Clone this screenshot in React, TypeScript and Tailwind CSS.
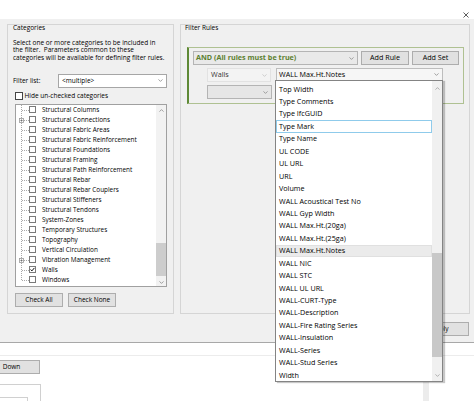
import React from "react";

const Chevron = ({ up = false, color = "#6a6a6a" }: { up?: boolean; color?: string }) => (
  <svg width="5" height="3" viewBox="0 0 5 3" className="block shrink-0">
    <path
      d={up ? "M0.5 2.6 L2.5 0.6 L4.5 2.6" : "M0.5 0.4 L2.5 2.4 L4.5 0.4"}
      fill="none"
      stroke={color}
      strokeWidth="0.8"
    />
  </svg>
);

type TreeItem = { label: string; plus?: boolean; checked?: boolean; last?: boolean };

const treeItems: TreeItem[] = [
  { label: "Structural Columns" },
  { label: "Structural Connections", plus: true },
  { label: "Structural Fabric Areas" },
  { label: "Structural Fabric Reinforcement" },
  { label: "Structural Foundations" },
  { label: "Structural Framing" },
  { label: "Structural Path Reinforcement" },
  { label: "Structural Rebar" },
  { label: "Structural Rebar Couplers" },
  { label: "Structural Stiffeners" },
  { label: "Structural Tendons" },
  { label: "System-Zones" },
  { label: "Temporary Structures" },
  { label: "Topography" },
  { label: "Vertical Circulation" },
  { label: "Vibration Management", plus: true },
  { label: "Walls", checked: true },
  { label: "Windows", last: true },
];

const ddItems = [
  "Top Width",
  "Type Comments",
  "Type IfcGUID",
  "Type Mark",
  "Type Name",
  "UL CODE",
  "UL URL",
  "URL",
  "Volume",
  "WALL Acoustical Test No",
  "WALL Gyp Width",
  "WALL Max.Ht.(20ga)",
  "WALL Max.Ht.(25ga)",
  "WALL Max.Ht.Notes",
  "WALL NIC",
  "WALL STC",
  "WALL UL URL",
  "WALL-CURT-Type",
  "WALL-Description",
  "WALL-Fire Rating Series",
  "WALL-Insulation",
  "WALL-Series",
  "WALL-Stud Series",
  "Width",
];

function TreeRow({ item }: { item: TreeItem }) {
  return (
    <div className="flex items-center h-[10px] shrink-0">
      <svg width="13" height="10" viewBox="0 0 13 10" className="block shrink-0">
        <line x1="5.5" y1="0" x2="5.5" y2={item.last ? 5.5 : 10} stroke="#a8a8a8" strokeWidth="1" strokeDasharray="1 1" />
        <line x1={item.plus ? 8 : 6} y1="5.5" x2="13" y2="5.5" stroke="#a8a8a8" strokeWidth="1" strokeDasharray="1 1" />
        {item.plus && (
          <g>
            <rect x="3.5" y="3.5" width="4" height="4" fill="#ffffff" stroke="#9a9a9a" strokeWidth="0.8" />
            <path d="M4.3 5.5 H6.7 M5.5 4.3 V6.7" stroke="#555" strokeWidth="0.6" />
          </g>
        )}
      </svg>
      <div className="w-[7px] h-[7px] border border-[#7a7a7a] bg-white shrink-0 flex items-center justify-center">
        {item.checked && (
          <svg width="5" height="5" viewBox="0 0 5 5" className="block">
            <path d="M0.6 2.5 L1.9 3.9 L4.4 0.9" fill="none" stroke="#111" strokeWidth="1" />
          </svg>
        )}
      </div>
      <span className="ml-[6px] text-[6.4px] leading-[10px] whitespace-nowrap">{item.label}</span>
    </div>
  );
}

function CategoriesBox() {
  return (
    <div className="w-[167px] h-[290px] border border-[#d5d5d5] flex flex-col shrink-0">
      <div className="ml-[5px] h-[6px] leading-[6px] text-[6.5px]">Categories</div>
      <div className="ml-[5px] mt-[7.5px] text-[6.5px] leading-[7.6px] whitespace-pre">
        {"Select one or more categories to be included in\nthe filter.  Parameters common to these\ncategories will be available for defining filter rules."}
      </div>
      <div className="mt-[12.7px] flex items-center h-[14px]">
        <span className="ml-[5px] text-[6.5px] leading-none">Filter list:</span>
        <div className="ml-auto mr-[6px] w-[109px] h-[14px] bg-white border border-[#a6a6a6] flex items-center pl-[3px] pr-[3px]">
          <span className="text-[6.5px] leading-none">&lt;multiple&gt;</span>
          <span className="ml-auto">
            <Chevron color="#8a8a8a" />
          </span>
        </div>
      </div>
      <div className="mt-[4px] ml-[7px] h-[8px] flex items-center">
        <div className="w-[8px] h-[8px] border border-[#444] bg-white shrink-0" />
        <span className="ml-[1.5px] text-[6.5px] leading-none whitespace-nowrap">Hide un-checked categories</span>
      </div>
      <div className="mt-[4px] ml-[7px] w-[152px] h-[183px] border border-[#a0a0a0] bg-white flex">
        <div className="flex-1 flex flex-col overflow-hidden">
          {treeItems.map((it) => (
            <TreeRow key={it.label} item={it} />
          ))}
        </div>
        <div className="w-[10px] bg-[#f2f2f2] flex flex-col">
          <div className="h-[12px] flex items-center justify-center">
            <Chevron up color="#8a8a8a" />
          </div>
          <div className="mt-[126px] h-[33px] bg-[#cdcdcd]" />
          <div className="flex-1 flex items-end justify-center pb-[2px]">
            <Chevron color="#8a8a8a" />
          </div>
        </div>
      </div>
      <div className="mt-[6px] ml-[7px] flex gap-[5px]">
        <div className="w-[48px] h-[14px] bg-[#e1e1e1] border border-[#adadad] flex items-center justify-center text-[6.5px] leading-none">
          Check All
        </div>
        <div className="w-[48px] h-[14px] bg-[#e1e1e1] border border-[#adadad] flex items-center justify-center text-[6.5px] leading-none">
          Check None
        </div>
      </div>
    </div>
  );
}

function FilterRulesBox() {
  return (
    <div className="w-[290px] h-[290px] border border-[#d5d5d5] flex flex-col shrink-0">
      <div className="ml-[4px] h-[6px] leading-[6px] text-[6.5px]">Filter Rules</div>
      <div className="mt-[16px] ml-[6px] w-[277px] h-[57px] border border-[#afc192] border-l-2 border-l-[#5f8a36] flex flex-col">
        <div className="mt-[3px] ml-[4px] flex">
          <div className="w-[165px] h-[14px] bg-[#e9e9e9] border border-[#b4b4b4] flex items-center pl-[2px] pr-[3px]">
            <span className="text-[7.2px] leading-none font-bold text-[#5c8030] whitespace-nowrap">AND (All rules must be true)</span>
            <span className="ml-auto">
              <Chevron color="#8a8a8a" />
            </span>
          </div>
          <div className="ml-[3px] w-[48px] h-[14px] bg-[#e1e1e1] border border-[#adadad] flex items-center justify-center text-[7.2px] leading-none">
            Add Rule
          </div>
          <div className="ml-[3px] w-[47px] h-[14px] bg-[#e1e1e1] border border-[#adadad] flex items-center justify-center text-[7.2px] leading-none">
            Add Set
          </div>
        </div>
        <div className="mt-[3px] ml-[18px] flex">
          <div className="w-[64px] h-[14px] bg-[#f3f3f3] border border-[#e2e2e2] flex items-center pl-[3px] pr-[3px]">
            <span className="text-[7.2px] leading-none text-[#333]">Walls</span>
            <span className="ml-auto">
              <Chevron color="#c4c4c4" />
            </span>
          </div>
          <div className="ml-[5px] w-[167px] h-[13px] bg-[#f6f6f6] border border-[#bdbdbd] flex items-center pl-[2px] pr-[3px]">
            <span className="text-[7.2px] leading-none whitespace-nowrap">WALL Max.Ht.Notes</span>
            <span className="ml-auto">
              <Chevron color="#8a8a8a" />
            </span>
          </div>
        </div>
        <div className="mt-[3px] ml-[18px] flex">
          <div className="w-[65px] h-[14px] bg-[#e6e6e6] border border-[#b4b4b4] flex items-center justify-end pr-[3px]">
            <Chevron color="#8a8a8a" />
          </div>
        </div>
      </div>
    </div>
  );
}

function Dropdown() {
  return (
    <div className="absolute left-[275px] top-[80px] w-[168px] h-[302px] bg-white border border-[#848484] flex shadow-[2px_1px_1px_rgba(0,0,0,0.22)]">
      <div className="w-[156px] flex flex-col pt-[2px] overflow-hidden">
        {ddItems.map((label, i) => {
          const focus = i === 3;
          const sel = i === 13;
          return (
            <div
              key={label}
              className={
                "h-[12.45px] shrink-0 flex items-center pl-[2px] border " +
                (focus
                  ? "border-[#8fcbeb] bg-white"
                  : sel
                  ? "border-[#e0e0e0] bg-[#ebebeb]"
                  : "border-transparent")
              }
            >
              <span className="text-[7.2px] leading-none whitespace-nowrap">{label}</span>
            </div>
          );
        })}
      </div>
      <div className="w-[10px] bg-[#f0f0f0] flex flex-col">
        <div className="h-[14px] flex items-center justify-center">
          <Chevron up color="#a0a0a0" />
        </div>
        <div className="mt-[158px] h-[104px] bg-[#c8c8c8]" />
        <div className="flex-1 flex items-end justify-center pb-[4px]">
          <Chevron color="#a0a0a0" />
        </div>
      </div>
    </div>
  );
}

export default function App() {
  return (
    <div className="relative w-[474px] h-[401px] overflow-hidden bg-white text-black font-['Open_Sans',sans-serif]">
      <div className="h-[19px] flex justify-end items-end pr-[5px] pb-[1px]">
        <svg width="6" height="6" viewBox="0 0 6 6" className="block">
          <path d="M0.5 0.5 L5.5 5.5 M5.5 0.5 L0.5 5.5" stroke="#333" strokeWidth="0.8" />
        </svg>
      </div>
      <div className="h-[324px] bg-[#f0f0f0] border-b border-[#a8a8a8] flex flex-col">
        <div className="flex mt-[5px] ml-[7px] gap-[6px]">
          <CategoriesBox />
          <FilterRulesBox />
        </div>
        <div className="flex justify-end pr-[5px] mt-[8px]">
          <div className="w-[58px] h-[14px] bg-[#e1e1e1] border border-[#adadad] flex items-center justify-center text-[6.5px] leading-none">
            Apply
          </div>
        </div>
      </div>
      <div className="flex flex-col">
        <div className="h-[13px] border-b border-[#ececec]" />
        <div className="mt-[4px] -ml-[17px] w-[57px] h-[14px] bg-[#e1e1e1] border border-[#adadad] flex items-center justify-center text-[6.5px] leading-none">
          Down
        </div>
        <div className="mt-[8px] h-[19px] flex items-end">
          <div className="w-[41px] h-[17px] border-t border-r border-[#d0d0d0] flex flex-col">
            <div className="mt-[12px] w-[28px] h-[4px] border-t border-r border-[#d0d0d0]" />
          </div>
          <div className="ml-[382px] w-[6px] h-[19px] bg-[#ececec]" />
        </div>
      </div>
      <Dropdown />
    </div>
  );
}
